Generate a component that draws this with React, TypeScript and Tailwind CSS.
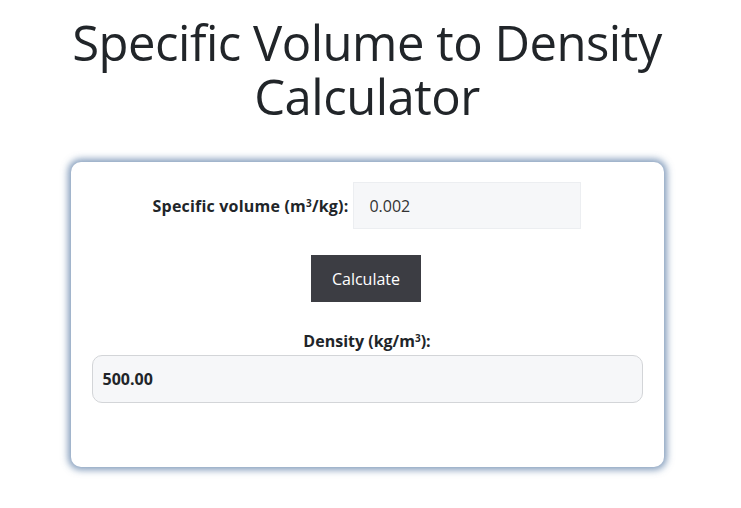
export default function App() {
  return (
    <div
      className="min-h-[508px] bg-white pr-[7px] text-[#212529]"
      style={{ fontFamily: '"Open Sans", "Noto Sans", sans-serif' }}
    >
      <h1 className="pt-[15px] text-center text-[49px] font-normal leading-[54px] tracking-[-0.5px]">
        Specific Volume to Density
        <br />
        Calculator
      </h1>

      <div className="mx-auto mt-[39px] h-[305px] w-[593px] rounded-[10px] bg-white px-[21px] pt-[20px] shadow-[0_0_7px_3px_rgba(80,115,160,0.7)]">
        <div className="flex items-center justify-center gap-[5px]">
          <label className="text-[16px] font-bold tracking-[0.2px]">
            Specific volume (m<sup className="text-[10px]">3</sup>/kg):
          </label>
          <input
            type="text"
            defaultValue="0.002"
            className="h-[47px] w-[228px] border border-[#eceef1] bg-[#f6f7f9] px-[15px] text-[16px] text-[#333] outline-none"
          />
        </div>

        <div className="mt-[26px] flex justify-center pr-[2px]">
          <button className="h-[47px] w-[110px] bg-[#3c3d43] text-[16px] text-white">
            Calculate
          </button>
        </div>

        <div className="mt-[27px] text-center text-[16px] font-bold">
          Density (kg/m<sup className="text-[10px]">3</sup>):
        </div>
        <div className="mt-[2px] flex h-[48px] items-center rounded-[10px] border border-[#d3d5d8] bg-[#f6f7f9] px-[10px] text-[16px] font-bold">
          500.00
        </div>
      </div>
    </div>
  )
}
